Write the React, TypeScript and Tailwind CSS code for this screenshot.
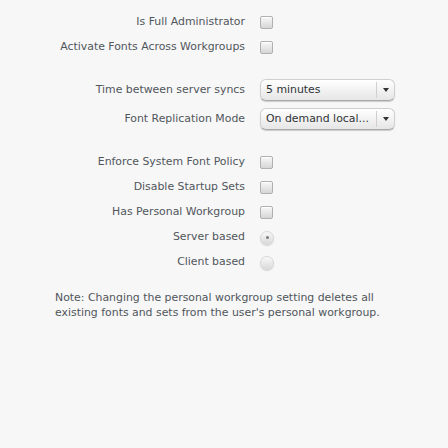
import React from "react";

const FONT = { fontFamily: '"DejaVu Sans", Verdana, sans-serif' };

function Checkbox() {
  return (
    <span className="block h-[13px] w-[13px] rounded-[2px] border border-[#b0b0b0] bg-gradient-to-b from-[#f8f8f8] to-[#d6d6d6] shadow-[inset_0_1px_0_#ffffff]" />
  );
}

function Radio({ checked }: { checked?: boolean }) {
  return (
    <span className="flex h-[14px] w-[14px] items-center justify-center rounded-full border border-[#d8d8d8] bg-gradient-to-b from-[#f8f8f8] to-[#dadada] shadow-[0_1px_1px_rgba(0,0,0,0.15)]">
      {checked && <span className="block h-[3px] w-[3px] rounded-full bg-[#7a7a7a]" />}
    </span>
  );
}

function Select({ value }: { value: string }) {
  return (
    <div className="flex h-[22px] w-[135px] items-stretch rounded-[6px] border border-[#cfcfcf] border-b-[#a9a9a9] bg-gradient-to-b from-[#ffffff] to-[#e6e6e6] shadow-[0_1px_1px_rgba(0,0,0,0.18)]">
      <span className="flex flex-1 items-center pl-[5px] text-[#2f3336]">{value}</span>
      <span className="my-[2px] w-px bg-[#cfcfcf]" />
      <span className="flex w-[17px] items-center justify-center">
        <svg width="6" height="4" viewBox="0 0 6 4">
          <path d="M0 0h6L3 4z" fill="#333" />
        </svg>
      </span>
    </div>
  );
}

function Row({
  label,
  children,
  tall,
}: {
  label: string;
  children: React.ReactNode;
  tall?: boolean;
}) {
  return (
    <div className={`flex items-center ${tall ? "h-[22px]" : "h-[25px]"}`}>
      <span className="w-[190px] whitespace-nowrap text-right">{label}</span>
      <span className="ml-[15px] flex items-center">{children}</span>
    </div>
  );
}

export default function App() {
  return (
    <div
      className="min-h-[448px] w-[448px] bg-[#f7f7f7] pl-[55px] pt-[10px] text-[10.9px] text-[#50565b]"
      style={FONT}
    >
      <div>
        <Row label="Is Full Administrator">
          <Checkbox />
        </Row>
        <Row label="Activate Fonts Across Workgroups">
          <Checkbox />
        </Row>
      </div>

      <div className="mt-[19px] flex flex-col gap-[7px]">
        <Row label="Time between server syncs" tall>
          <Select value="5 minutes" />
        </Row>
        <Row label="Font Replication Mode" tall>
          <Select value="On demand local..." />
        </Row>
      </div>

      <div className="mt-[20px]">
        <Row label="Enforce System Font Policy">
          <Checkbox />
        </Row>
        <Row label="Disable Startup Sets">
          <Checkbox />
        </Row>
        <Row label="Has Personal Workgroup">
          <Checkbox />
        </Row>
        <Row label="Server based">
          <Radio checked />
        </Row>
        <Row label="Client based">
          <Radio />
        </Row>
      </div>

      <p className="mt-[15px] w-[340px] leading-[15px]">
        Note: Changing the personal workgroup setting deletes all existing fonts and sets from the
        user's personal workgroup.
      </p>
    </div>
  );
}
